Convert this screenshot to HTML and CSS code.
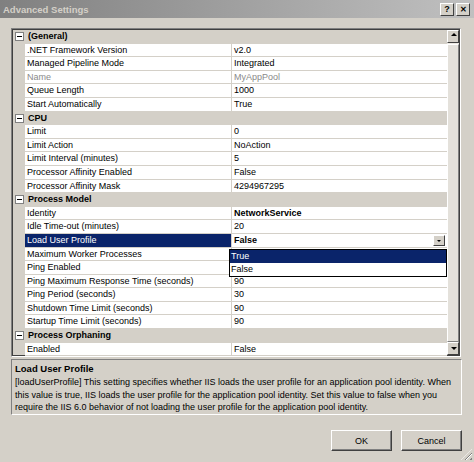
FILE: index.html
```html
<!DOCTYPE html>
<html lang="en">
<head>
  <meta charset="UTF-8">
  <title>Advanced Settings</title>
  <link rel="stylesheet" href="styles.css">
</head>
<body>
  <div class="dialog">
    <!-- Title bar -->
    <div class="titlebar">
      <span class="title">Advanced Settings</span>
      <span class="tb-btn">?</span>
      <span class="tb-btn close">&#10005;</span>
    </div>

    <!-- Property grid -->
    <div class="grid">
      <div class="rows">
        <div class="cat"><span class="minus"></span>(General)</div>
        <div class="row"><span class="name">.NET Framework Version</span><span class="val">v2.0</span></div>
        <div class="row"><span class="name">Managed Pipeline Mode</span><span class="val">Integrated</span></div>
        <div class="row dim"><span class="name">Name</span><span class="val">MyAppPool</span></div>
        <div class="row"><span class="name">Queue Length</span><span class="val">1000</span></div>
        <div class="row"><span class="name">Start Automatically</span><span class="val">True</span></div>

        <div class="cat"><span class="minus"></span>CPU</div>
        <div class="row"><span class="name">Limit</span><span class="val">0</span></div>
        <div class="row"><span class="name">Limit Action</span><span class="val">NoAction</span></div>
        <div class="row"><span class="name">Limit Interval (minutes)</span><span class="val">5</span></div>
        <div class="row"><span class="name">Processor Affinity Enabled</span><span class="val">False</span></div>
        <div class="row"><span class="name">Processor Affinity Mask</span><span class="val">4294967295</span></div>

        <div class="cat"><span class="minus"></span>Process Model</div>
        <div class="row"><span class="name">Identity</span><span class="val bold">NetworkService</span></div>
        <div class="row"><span class="name">Idle Time-out (minutes)</span><span class="val">20</span></div>
        <div class="row selected"><span class="name">Load User Profile</span><span class="val bold">False<span class="drop-btn"></span></span></div>
        <!-- values of the next two rows are hidden by the open list -->
        <div class="row"><span class="name">Maximum Worker Processes</span><span class="val"></span></div>
        <div class="row"><span class="name">Ping Enabled</span><span class="val"></span></div>
        <div class="row"><span class="name">Ping Maximum Response Time (seconds)</span><span class="val">90</span></div>
        <div class="row"><span class="name">Ping Period (seconds)</span><span class="val">30</span></div>
        <div class="row"><span class="name">Shutdown Time Limit (seconds)</span><span class="val">90</span></div>
        <div class="row"><span class="name">Startup Time Limit (seconds)</span><span class="val">90</span></div>

        <div class="cat"><span class="minus"></span>Process Orphaning</div>
        <div class="row"><span class="name">Enabled</span><span class="val">False</span></div>

        <!-- open dropdown list -->
        <div class="droplist">
          <div class="opt active">True</div>
          <div class="opt">False</div>
        </div>
      </div>

      <div class="scrollbar">
        <div class="sb-btn"><span class="arrow up"></span></div>
        <div class="sb-thumb"></div>
        <div class="sb-btn"><span class="arrow down"></span></div>
      </div>
    </div>

    <!-- Description panel -->
    <div class="desc">
      <div class="desc-title">Load User Profile</div>
      <div class="desc-text">[loadUserProfile] This setting specifies whether IIS loads the user profile for an application pool identity. When<br>this value is true, IIS loads the user profile for the application pool identity. Set this value to false when you<br>require the IIS 6.0 behavior of not loading the user profile for the application pool identity.</div>
    </div>

    <div class="buttons">
      <button class="btn">OK</button>
      <button class="btn">Cancel</button>
    </div>
    <div class="grip"></div>
  </div>
</body>
</html>
```

FILE: styles.css
```css
/* Classic Windows dialog look */
body {
  margin: 0;
  padding: 0;
  background-color: #d4d0c8;
  font-family: "Liberation Sans", Arial, sans-serif;
  font-size: 9px;
  color: #000;
}

.dialog {
  position: relative;
  width: 474px;
  height: 462px;
  overflow: hidden;
}

.titlebar {
  height: 18px;
  display: flex;
  align-items: center;
  padding: 0 4px 0 3px;
  background: linear-gradient(to right, #808080, #c0c0c0);
}

.title {
  flex: 1;
  font-weight: bold;
  font-size: 9.5px;
  color: #d4d0c8;
}

.tb-btn {
  width: 12px;
  height: 11px;
  margin-left: 2px;
  background-color: #d4d0c8;
  border: 1px solid;
  border-color: #fff #404040 #404040 #fff;
  font-weight: bold;
  font-size: 9px;
  line-height: 11px;
  text-align: center;
}

.tb-btn.close {
  font-size: 8px;
}

/* property grid */
.grid {
  display: flex;
  margin: 10px 0 0 11px;
  width: 448px;
  border: 1px solid;
  border-color: #808080 #fff #fff #808080;
  outline: 1px solid #404040;
  outline-offset: -2px;
  background-color: #d4d0c8;
}

.rows {
  position: relative;
  flex: 1;
  padding: 1px 0 0 1px;
}

.row, .cat {
  display: flex;
  height: 13.6px;
  line-height: 13px;
  box-sizing: border-box;
}

.cat {
  font-weight: bold;
  align-items: center;
}

.minus {
  position: relative;
  width: 7px;
  height: 7px;
  margin: 0 4px 0 2px;
  border: 1px solid #808080;
  background-color: #fff;
}

.minus::after {
  content: "";
  position: absolute;
  left: 1px;
  top: 3px;
  width: 5px;
  height: 1px;
  background-color: #000;
}

.row {
  padding-left: 12px;
}

.name {
  width: 204px;
  padding-left: 2px;
  background-color: #fff;
  border-bottom: 1px solid #d4d0c8;
  border-right: 1px solid #d4d0c8;
  white-space: nowrap;
  overflow: hidden;
}

.val {
  position: relative;
  flex: 1;
  padding-left: 2px;
  background-color: #fff;
  border-bottom: 1px solid #d4d0c8;
  white-space: nowrap;
}

.dim {
  color: #8a8a8a;
}

.bold {
  font-weight: bold;
}

.selected .name {
  background-color: #0a246a;
  color: #fff;
}

.drop-btn {
  position: absolute;
  right: 2px;
  top: 1px;
  width: 10px;
  height: 9px;
  background-color: #d4d0c8;
  border: 1px solid;
  border-color: #fff #404040 #404040 #fff;
}

.drop-btn::after {
  content: "";
  position: absolute;
  left: 3px;
  top: 4px;
  border: 2px solid transparent;
  border-top: 2px solid #000;
  border-bottom: 0;
}

.droplist {
  position: absolute;
  left: 217px;
  top: 220px;
  width: 216px;
  height: 26px;
  background-color: #fff;
  border: 1px solid #000;
}

.opt {
  height: 13px;
  line-height: 13px;
  padding-left: 1px;
}

.opt.active {
  background-color: #0a246a;
  color: #fff;
}

/* scrollbar */
.scrollbar {
  display: flex;
  flex-direction: column;
  width: 12px;
  margin: 1px 1px 1px 0;
  background-color: #ece9e2;
}

.sb-btn {
  position: relative;
  height: 11px;
  background-color: #d4d0c8;
  border: 1px solid;
  border-color: #fff #404040 #404040 #fff;
}

.sb-thumb {
  flex: 1;
  margin-top: 1px;
  background-color: #e4e1db;
  border: 1px solid;
  border-color: #fff #808080 #808080 #fff;
}

.arrow {
  position: absolute;
  left: 3px;
  border: 3px solid transparent;
}

.arrow.up {
  top: 2px;
  border-bottom: 3px solid #000;
  border-top: 0;
}

.arrow.down {
  top: 4px;
  border-top: 3px solid #000;
  border-bottom: 0;
}

/* description */
.desc {
  margin: 2px 0 0 11px;
  width: 446px;
  height: 51px;
  padding: 3px 0 0 3px;
  border: 1px solid;
  border-color: #808080 #fff #fff #808080;
}

.desc-title {
  font-weight: bold;
  font-size: 9.5px;
  height: 13px;
}

.desc-text {
  line-height: 12.5px;
  white-space: nowrap;
}

.buttons {
  display: flex;
  justify-content: flex-end;
  gap: 9px;
  margin: 15px 12px 0 0;
}

.btn {
  width: 61px;
  height: 21px;
  font-family: "Liberation Sans", Arial, sans-serif;
  font-size: 9px;
  background-color: #d4d0c8;
  border: 1px solid;
  border-color: #fff #404040 #404040 #fff;
  box-shadow: inset -1px -1px #808080;
  padding: 0;
}

.grip {
  position: absolute;
  right: 2px;
  bottom: 2px;
  width: 11px;
  height: 11px;
  background: repeating-linear-gradient(135deg, transparent 0 2px, #808080 2px 3px, #fff 3px 4px);
  clip-path: polygon(100% 0, 100% 100%, 0 100%);
}
```
